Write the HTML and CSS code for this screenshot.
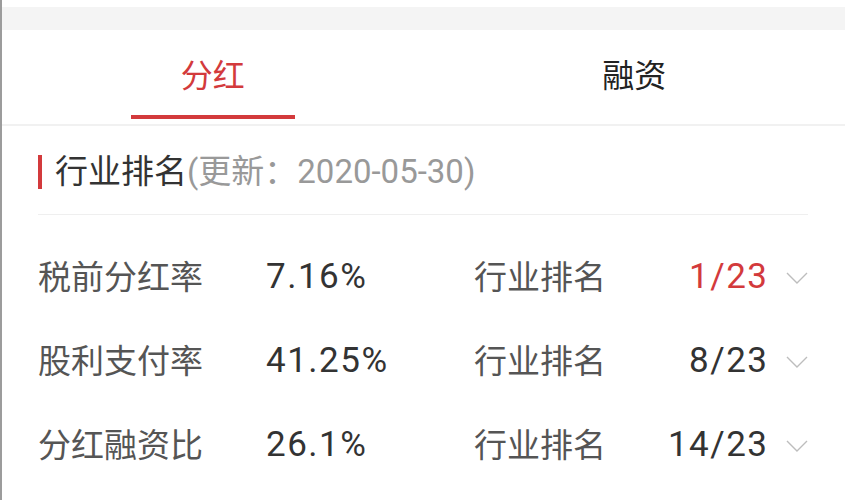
FILE: index.html
```html
<!DOCTYPE html>
<html lang="zh-CN">
<head>
<meta charset="utf-8">
<title>分红</title>
<link rel="stylesheet" href="styles.css">
</head>
<body>
<div class="page">
  <div class="top-gap"></div>
  <div class="band"></div>
  <nav class="tabs">
    <div class="tab active"><span class="tab-label">分红</span><i class="tab-bar"></i></div>
    <div class="tab"><span class="tab-label">融资</span><i class="tab-bar"></i></div>
  </nav>
  <section class="rank">
    <h2 class="rank-title"><span class="mark"></span>行业排名<span class="updated">(更新：2020-05-30)</span></h2>
    <div class="rows">
      <div class="row">
        <span class="label">税前分红率</span>
        <span class="value">7.16%</span>
        <span class="label">行业排名</span>
        <span class="pos top">1/23</span>
        <svg class="chev" viewBox="0 0 22 12" width="22" height="12"><polyline points="1,1 11,11 21,1"/></svg>
      </div>
      <div class="row">
        <span class="label">股利支付率</span>
        <span class="value">41.25%</span>
        <span class="label">行业排名</span>
        <span class="pos">8/23</span>
        <svg class="chev" viewBox="0 0 22 12" width="22" height="12"><polyline points="1,1 11,11 21,1"/></svg>
      </div>
      <div class="row">
        <span class="label">分红融资比</span>
        <span class="value">26.1%</span>
        <span class="label">行业排名</span>
        <span class="pos">14/23</span>
        <svg class="chev" viewBox="0 0 22 12" width="22" height="12"><polyline points="1,1 11,11 21,1"/></svg>
      </div>
    </div>
  </section>
</div>
</body>
</html>
```
FILE: styles.css
```css
* { box-sizing: border-box; }

html, body {
  margin: 0;
  background: #fff;
}

body {
  font-family: Roboto, "Noto Sans CJK SC", sans-serif;
  color: #333;
}

.page {
  width: 845px;
  height: 500px;
  overflow: hidden;
  border-left: 2px solid #9c9c9c;
}

.top-gap { height: 7px; }

.band {
  height: 23px;
  background: #f4f4f4;
}

/* tab strip */
.tabs {
  display: grid;
  grid-template-columns: 1fr 1fr;
  border-bottom: 2px solid #f1f1f1;
}

.tab {
  display: flex;
  flex-direction: column;
  align-items: center;
  padding-top: 24px;
}

.tab-label {
  font-size: 32px;
  line-height: 44px;
  color: #222;
}

.tab-bar {
  display: block;
  width: 164px;
  height: 4px;
  margin: 17px 0 5px;
}

.tab.active .tab-label { color: #d33a3c; }
.tab.active .tab-bar { background: #d33a3c; }

/* industry ranking */
.rank {
  margin: 0 37px 0 36px;
}

.rank-title {
  display: flex;
  align-items: center;
  margin: 0;
  padding: 28px 0 24px;
  border-bottom: 1px solid #efefef;
  font-size: 33px;
  line-height: 36px;
  font-weight: normal;
  color: #333;
}

.mark {
  width: 4px;
  height: 34px;
  background: #d33a3c;
  margin-right: 13px;
}

.updated { color: #999; }

.rows { padding-top: 18px; }

.row {
  display: grid;
  grid-template-columns: 228px 208px 1fr auto auto;
  align-items: center;
  height: 84px;
}

.label {
  font-size: 33px;
  color: #555;
}

.value,
.pos {
  font-size: 35px;
  letter-spacing: 1.5px;
  color: #333;
  padding-top: 3px;
}

.pos {
  text-align: right;
  margin-right: -1.5px;
}

.pos.top { color: #d33a3c; }

.chev {
  margin-left: 19px;
  margin-top: 5px;
  fill: none;
  stroke: #bdbdbd;
  stroke-width: 1.4;
}
```
